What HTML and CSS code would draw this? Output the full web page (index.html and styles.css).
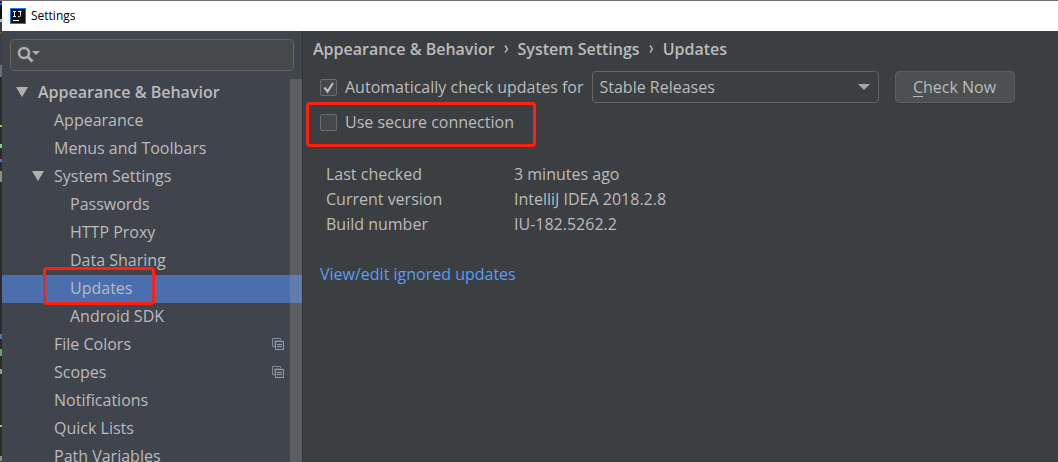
FILE: index.html
```html
<!DOCTYPE html>
<html lang="en">
<head>
<meta charset="utf-8">
<meta name="viewport" content="width=device-width, initial-scale=1">
<title>Settings</title>
<link rel="stylesheet" href="styles.css">
</head>
<body>
<svg class="defs" width="0" height="0" aria-hidden="true">
  <symbol id="caret" viewBox="0 0 12 10"><path d="M0 0h12L6 10z" fill="#b0b0b0"/></symbol>
  <symbol id="copy" viewBox="0 0 12 12"><path d="M3 8.500H.5v-8h8V3" fill="none" stroke="#7f8b95"/><path d="M2.500 10V2.500H10" fill="none" stroke="#5b646e"/><rect x="3.500" y="3.500" width="8" height="8" fill="#434a53" stroke="#8f9ba5"/><path d="M5 6.500h5M5 8.500h5" stroke="#8f9ba5"/></symbol>
  <symbol id="sep" viewBox="0 0 5 8"><path d="M1 .5 3.500 4 1 7.500" fill="none" stroke="#bbb" stroke-width="1.300"/></symbol>
</svg>
<div class="window">
  <header class="titlebar">
    <svg class="logo" viewBox="0 0 16 16" aria-hidden="true"><rect width="16" height="16" fill="#1479e6"/><rect x="1" y="1" width="14" height="14" fill="#111"/><path d="M3 3.500h3M4.500 3.500v5M3 8.500h3M8 3.500h3.500M10.500 3.500v4q0 1-1 1H8" fill="none" stroke="#eee"/><path d="M3 12.500h6" stroke="#fff"/></svg>
    <h1 class="title">Settings</h1>
  </header>
  <div class="content">
    <aside class="sidebar">
      <div class="search">
        <svg class="search-icon" viewBox="0 0 24 18" aria-hidden="true"><circle cx="7" cy="7" r="5" fill="none" stroke="#adb0b2" stroke-width="2.500"/><path d="m10.500 10.500 5 5" stroke="#adb0b2" stroke-width="3"/><path d="M15 5h8l-4 4z" fill="#adb0b2"/></svg>
        <input class="search-input" type="text" aria-label="Search settings">
      </div>
      <div class="tree-area">
        <ul class="tree">
          <li class="row root"><svg class="caret"><use href="#caret"/></svg>Appearance &amp; Behavior</li>
          <li class="row level-1">Appearance</li>
          <li class="row level-1">Menus and Toolbars</li>
          <li class="row group"><svg class="caret"><use href="#caret"/></svg>System Settings</li>
          <li class="row level-2">Passwords</li>
          <li class="row level-2">HTTP Proxy</li>
          <li class="row level-2">Data Sharing</li>
          <li class="row level-2 selected">Updates<span class="mark mark-row"></span></li>
          <li class="row level-2">Android SDK</li>
          <li class="row level-1">File Colors<svg class="copy"><use href="#copy"/></svg></li>
          <li class="row level-1">Scopes<svg class="copy"><use href="#copy"/></svg></li>
          <li class="row level-1">Notifications</li>
          <li class="row level-1">Quick Lists</li>
          <li class="row level-1">Path Variables</li>
        </ul>
        <div class="scrollbar"></div>
      </div>
    </aside>
    <main class="panel">
      <nav class="crumbs" aria-label="Breadcrumb">
        <span>Appearance &amp; Behavior</span><svg class="sep"><use href="#sep"/></svg><span>System Settings</span><svg class="sep"><use href="#sep"/></svg><span>Updates</span>
      </nav>
      <div class="options">
        <div class="line">
          <label class="check"><input type="checkbox" checked>Automatically check updates for</label>
          <div class="picker">
            <select aria-label="Update channel"><option>Stable Releases</option></select>
            <svg class="picker-arrow" viewBox="0 0 12 6" aria-hidden="true"><path d="M0 0h12L6 6z" fill="#a5a8aa"/></svg>
          </div>
          <button class="button" type="button"><span class="mnemonic">C</span>heck Now</button>
        </div>
        <div class="line secure">
          <label class="check"><input type="checkbox">Use secure connection</label>
          <span class="mark mark-option"></span>
        </div>
        <dl class="info">
          <dt>Last checked</dt><dd>3 minutes ago</dd>
          <dt>Current version</dt><dd>IntelliJ IDEA 2018.2.8</dd>
          <dt>Build number</dt><dd>IU-182.5262.2</dd>
        </dl>
        <a class="link" href="#">View/edit ignored updates</a>
      </div>
    </main>
  </div>
</div>
</body>
</html>
```
FILE: styles.css
```css
* { box-sizing: border-box; }
body {
  margin: 0;
  height: 100vh;
  overflow: hidden;
  background: #2b2b2b;
  color: #bbb;
  font: 16px/28px "Open Sans", "Noto Sans", sans-serif;
}
.defs { position: absolute; }
/* The left padding shows a sliver of the editor behind the dialog. */
.window {
  display: flex;
  flex-direction: column;
  height: 100%;
  padding-left: 2px;
  border-top: 1px solid #6f6f6f;
  background: linear-gradient(
    #2b2b2b 2px, #1479e6 2px 4px, #111 4px 18px, #bbb 18px 21px,
    #3c3f41 21px 31px, #7a4a4a 31px 33px, #3c3f41 33px 64px,
    #6b7078 64px 76px, #2b2b2b 76px 124px, #a5c261 124px 126px,
    #2b2b2b 126px 143px, #8fc98f 143px 147px, #2b2b2b 147px 158px,
    #3a76c4 158px 161px, #2b2b2b 161px 170px, #8a8a8a 170px 181px,
    #2b2b2b 181px 333px, #4a78a8 333px 338px, #2b2b2b 338px 348px,
    #6f9c72 348px 355px, #2b2b2b 355px 368px, #9a9a9a 368px 373px,
    #2b2b2b 373px 424px, #b5b58a 424px 426px, #2b2b2b 426px 455px,
    #6f9c72 455px 460px, #2b2b2b 460px);
}
.titlebar {
  display: flex;
  flex: none;
  align-items: center;
  gap: 5px;
  height: 30px;
  padding-left: 8px;
  background: #fff;
  color: #000;
}
.logo { width: 16px; height: 16px; }
.title { margin: 0; font-size: 12px; font-weight: 400; }
.content { display: flex; flex: 1; min-height: 0; }
.sidebar {
  display: flex;
  flex: none;
  flex-direction: column;
  width: 301px;
  border-right: 1px solid #323537;
  background: #40444d;
}
.search {
  display: flex;
  flex: none;
  align-items: center;
  height: 32px;
  margin: 8px;
  padding-left: 6px;
  border: 1px solid #646464;
  border-radius: 4px;
  background: #45494a;
}
.search-icon { flex: none; width: 24px; height: 18px; }
.search-input {
  flex: 1;
  min-width: 0;
  border: 0;
  outline: 0;
  background: transparent;
  color: inherit;
  font: inherit;
}
.tree-area { position: relative; flex: 1; min-height: 0; }
.tree { height: 100%; margin: 0; padding: 0; overflow: hidden; list-style: none; }
.row { display: flex; position: relative; align-items: center; height: 28px; padding-bottom: 2px; }
.root { gap: 10px; padding-left: 14px; font-weight: 600; }
.group { gap: 10px; padding-left: 30px; }
.level-1 { padding-left: 52px; }
.level-2 { padding-left: 68px; }
.selected { background: #4b6eaf; }
.caret { width: 12px; height: 10px; }
.copy { width: 12px; height: 12px; margin: 0 18px 0 auto; }
.scrollbar {
  position: absolute;
  top: 0;
  right: 0;
  bottom: 0;
  width: 12px;
  background: rgba(166, 166, 166, 0.25);
}
.mark {
  position: absolute;
  border: 3px solid #ff2010;
  border-radius: 4px;
  pointer-events: none;
}
.mark-row { top: -8px; left: 41px; width: 112px; height: 38px; }
.mark-option { top: -4px; left: -14px; width: 230px; height: 45px; }
.panel { flex: 1; min-width: 0; padding: 4px 10px; background: #3c3f41; }
.crumbs { display: flex; align-items: center; gap: 9px; font-weight: 600; }
.sep { width: 5px; height: 8px; }
.options { padding: 8px 7px; }
.line { display: flex; position: relative; align-items: center; height: 32px; }
.secure { margin-top: 3px; }
.check { display: flex; align-items: center; gap: 8px; white-space: nowrap; }
.check input {
  appearance: none;
  width: 17px;
  height: 17px;
  margin: 0;
  border: 1px solid #6b6b6b;
  border-radius: 2px;
  background: #43494a;
}
.check input:checked {
  background: #43494a url("data:image/svg+xml,%3Csvg xmlns='http://www.w3.org/2000/svg' viewBox='0 0 15 15'%3E%3Cpath d='m3.500 7.500 3 4L12 3' fill='none' stroke='%23bbb' stroke-width='2.200'/%3E%3C/svg%3E");
}
.picker { position: relative; width: 287px; margin-left: 8px; }
.picker select {
  display: block;
  appearance: none;
  width: 100%;
  height: 32px;
  padding: 0 28px 0 7px;
  border: 1px solid #646464;
  border-radius: 4px;
  background: #3c3f41;
  color: inherit;
  font: inherit;
}
.picker-arrow { position: absolute; top: 13px; right: 9px; width: 12px; height: 6px; pointer-events: none; }
.button {
  width: 120px;
  height: 32px;
  margin-left: 16px;
  padding: 0;
  border: 1px solid #5e6060;
  border-radius: 4px;
  background: #4c5052;
  box-shadow: 0 1px 1px #353739;
  color: inherit;
  font: inherit;
}
.mnemonic { text-decoration: underline; text-underline-offset: 3px; }
.info {
  display: grid;
  grid-template-columns: 188px 1fr;
  margin: 24px 0 0 6px;
  line-height: 25px;
}
.info dd { margin: 0; }
.link { display: inline-block; margin-top: 23px; color: #589df6; text-decoration: none; }
```
